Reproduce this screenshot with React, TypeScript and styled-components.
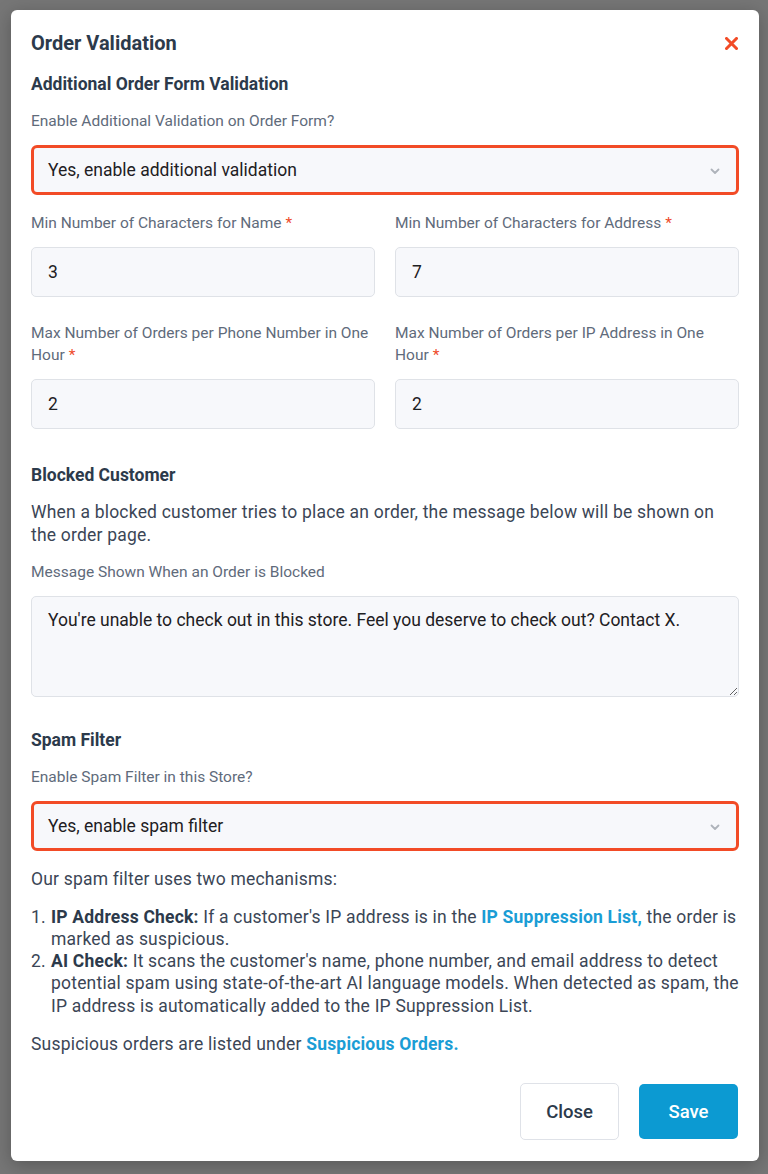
import React from "react";
import styled, { createGlobalStyle } from "styled-components";

const GlobalStyle = createGlobalStyle`
  html, body { margin: 0; padding: 0; }
  body {
    background: #767676;
    font-family: Roboto, "Liberation Sans", Arial, sans-serif;
    -webkit-font-smoothing: antialiased;
  }
  * { box-sizing: border-box; }
`;

const Backdrop = styled.div`
  min-height: 1174px;
  padding: 10px 9px 12px 11px;
  background: #767676;
`;

const Modal = styled.div`
  width: 748px;
  background: #ffffff;
  border-radius: 6px;
  padding: 21px 20px 21px 20px;
  box-shadow: 0 4px 18px rgba(0, 0, 0, 0.25);
`;

const Header = styled.div`
  display: flex;
  align-items: center;
  justify-content: space-between;
`;

const Title = styled.h2`
  margin: 0;
  font-size: 20px;
  line-height: 24px;
  font-weight: 700;
  color: #2c3a4b;
`;

const CloseIcon = styled.button`
  border: 0;
  background: none;
  padding: 0;
  margin-right: 1px;
  display: flex;
  cursor: pointer;
`;

const SectionTitle = styled.h3<{ $mt: number }>`
  margin: ${(p) => p.$mt}px 0 0;
  font-size: 17.5px;
  line-height: 22px;
  font-weight: 700;
  color: #2c3a4b;
`;

const Label = styled.div<{ $mt?: number }>`
  margin-top: ${(p) => p.$mt ?? 0}px;
  font-size: 15.5px;
  line-height: 22px;
  color: #5f6b7b;
`;

const Req = styled.span`
  color: #ee4a2a;
  margin-left: 4px;
`;

const Highlight = styled.div<{ $mt: number }>`
  margin-top: ${(p) => p.$mt}px;
  height: 50px;
  border: 3px solid #f24b26;
  border-radius: 6px;
  background: #f7f8fb;
  display: flex;
  align-items: center;
  justify-content: space-between;
  padding: 0 16px 0 14px;
  font-size: 17.5px;
  color: #1e2023;
`;

const Chevron = styled.svg`
  width: 10px;
  height: 7px;
  margin-top: 2px;
`;

const Grid = styled.div`
  margin-top: 17px;
  display: grid;
  grid-template-columns: 1fr 1fr;
  column-gap: 20px;
  row-gap: 25px;
`;

const Field = styled.div`
  display: flex;
  flex-direction: column;
  justify-content: space-between;
`;

const Input = styled.div`
  margin-top: 13px;
  height: 50px;
  border: 1px solid #dfe2e7;
  border-radius: 5px;
  background: #f7f8fb;
  display: flex;
  align-items: center;
  padding: 0 16px;
  font-size: 17.5px;
  color: #1e2023;
`;

const TextArea = styled.textarea`
  display: block;
  margin-top: 13px;
  width: 100%;
  height: 101px;
  border: 1px solid #dfe2e7;
  border-radius: 5px;
  background: #f7f8fb;
  padding: 12px 16px;
  font-family: Roboto, "Liberation Sans", Arial, sans-serif;
  font-size: 17.5px;
  line-height: 22px;
  color: #1e2023;
  resize: both;
  outline: none;
`;

const Paragraph = styled.p<{ $mt: number }>`
  margin: ${(p) => p.$mt}px 0 0;
  font-size: 17.5px;
  line-height: 22.5px;
  color: #3b4656;
  letter-spacing: 0.2px;
`;

const List = styled.ol`
  margin: 15px 0 0;
  padding: 0;
  list-style: none;
`;

const Item = styled.li`
  display: flex;
  font-size: 17.5px;
  line-height: 22.3px;
  color: #3b4656;
  letter-spacing: 0.2px;
`;

const Num = styled.span`
  flex: 0 0 20px;
`;

const Strong = styled.b`
  font-weight: 700;
  color: #2c3a4b;
`;

const Link = styled.a`
  color: #1a9dd5;
  font-weight: 700;
  text-decoration: none;
`;

const Footer = styled.div`
  margin-top: 28px;
  display: flex;
  justify-content: flex-end;
  align-items: center;
  gap: 20px;
  padding-right: 1px;
`;

const Button = styled.button<{ $primary?: boolean }>`
  width: 99px;
  height: ${(p) => (p.$primary ? 55 : 57)}px;
  border-radius: 5px;
  border: ${(p) => (p.$primary ? "0" : "1px solid #dfe2e8")};
  background: ${(p) => (p.$primary ? "#0c9ad2" : "#ffffff")};
  color: ${(p) => (p.$primary ? "#ffffff" : "#2c3a4b")};
  font-family: Roboto, "Liberation Sans", Arial, sans-serif;
  font-size: 18.5px;
  font-weight: 500;
  cursor: pointer;
`;

const ChevronDown = () => (
  <Chevron viewBox="0 0 10 7">
    <path d="M1.5 1.5 L5 5 L8.5 1.5" fill="none" stroke="#aeb3ba" strokeWidth="1.8" strokeLinecap="round" strokeLinejoin="round" />
  </Chevron>
);

export default function App() {
  return (
    <>
      <GlobalStyle />
      <Backdrop>
        <Modal>
          <Header>
            <Title>Order Validation</Title>
            <CloseIcon aria-label="Close">
              <svg width="13" height="13" viewBox="0 0 13 13">
                <path d="M1.5 1.5 L11.5 11.5 M11.5 1.5 L1.5 11.5" stroke="#f24b26" strokeWidth="3" strokeLinecap="square" />
              </svg>
            </CloseIcon>
          </Header>

          <SectionTitle $mt={18}>Additional Order Form Validation</SectionTitle>
          <Label $mt={15}>Enable Additional Validation on Order Form?</Label>
          <Highlight $mt={13}>
            <span>Yes, enable additional validation</span>
            <ChevronDown />
          </Highlight>

          <Grid>
            <Field>
              <Label>
                Min Number of Characters for Name<Req>*</Req>
              </Label>
              <Input>3</Input>
            </Field>
            <Field>
              <Label>
                Min Number of Characters for Address<Req>*</Req>
              </Label>
              <Input>7</Input>
            </Field>
            <Field>
              <Label>
                Max Number of Orders per Phone Number in One Hour<Req>*</Req>
              </Label>
              <Input>2</Input>
            </Field>
            <Field>
              <Label>
                Max Number of Orders per IP Address in One Hour<Req>*</Req>
              </Label>
              <Input>2</Input>
            </Field>
          </Grid>

          <SectionTitle $mt={35}>Blocked Customer</SectionTitle>
          <Paragraph $mt={15}>
            When a blocked customer tries to place an order, the message below will be shown on the order page.
          </Paragraph>
          <Label $mt={15}>Message Shown When an Order is Blocked</Label>
          <TextArea defaultValue="You're unable to check out in this store. Feel you deserve to check out? Contact X." />

          <SectionTitle $mt={32}>Spam Filter</SectionTitle>
          <Label $mt={15}>Enable Spam Filter in this Store?</Label>
          <Highlight $mt={13}>
            <span>Yes, enable spam filter</span>
            <ChevronDown />
          </Highlight>

          <Paragraph $mt={17}>Our spam filter uses two mechanisms:</Paragraph>
          <List>
            <Item>
              <Num>1.</Num>
              <span>
                <Strong>IP Address Check:</Strong> If a customer's IP address is in the{" "}
                <Link href="#">IP Suppression List,</Link> the order is marked as suspicious.
              </span>
            </Item>
            <Item>
              <Num>2.</Num>
              <span>
                <Strong>AI Check:</Strong> It scans the customer's name, phone number, and email address to detect
                potential spam using state-of-the-art AI language models. When detected as spam, the IP address is
                automatically added to the IP Suppression List.
              </span>
            </Item>
          </List>
          <Paragraph $mt={16}>
            Suspicious orders are listed under <Link href="#">Suspicious Orders.</Link>
          </Paragraph>

          <Footer>
            <Button>Close</Button>
            <Button $primary>Save</Button>
          </Footer>
        </Modal>
      </Backdrop>
    </>
  );
}
